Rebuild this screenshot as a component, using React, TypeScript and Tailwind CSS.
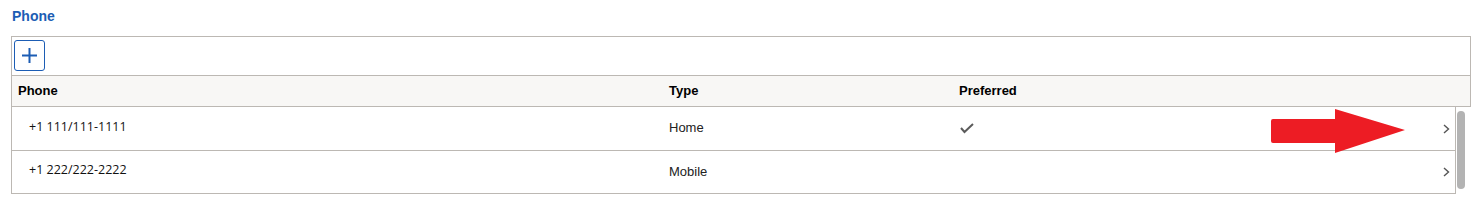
import React from 'react';

const BORDER = 'border-[#bcb8b3]';

const phones = [
  { number: '+1 111/111-1111', type: 'Home', preferred: true, h: 'h-[44px]' },
  { number: '+1 222/222-2222', type: 'Mobile', preferred: false, h: 'h-[43px]' },
];

const Check = () => (
  <svg width="14" height="11" viewBox="0 0 14 11" className="block">
    <polyline points="1,5 4.5,9 13,1" fill="none" stroke="#5b5b5b" strokeWidth="2" />
  </svg>
);

const Chevron = () => (
  <svg width="7" height="10" viewBox="0 0 7 10" className="block">
    <polyline points="1,1 5.5,5 1,9" fill="none" stroke="#555" strokeWidth="1.4" />
  </svg>
);

const RedArrow = () => (
  <svg
    width="136"
    height="46"
    viewBox="0 0 136 46"
    className="absolute left-[1270px] top-[108px] pointer-events-none"
  >
    <path d="M3 11 H65 V1 L135 22 L65 45 V35 H3 Q1 35 1 33 V13 Q1 11 3 11 Z" fill="#ed1c24" />
  </svg>
);

export default function App() {
  return (
    <div className="relative w-[1476px] h-[203px] bg-white px-[11px]" style={{ fontFamily: '"Liberation Sans", Arial, sans-serif' }}>
      <div className="h-[36px] pt-[8px] pl-px text-[14px] leading-4 font-bold text-[#1c5db4]">Phone</div>

      {/* toolbar */}
      <div className={`h-[40px] border ${BORDER} flex items-start pt-[3px] pl-[2px] w-[1460px]`}>
        <button className="w-[31px] h-[31px] border border-[#1c5db4] rounded-[3px] flex items-center justify-center bg-white">
          <svg width="15" height="15" viewBox="0 0 15 15">
            <path d="M7.5 0 V15 M0 7.5 H15" stroke="#1c5db4" strokeWidth="2" />
          </svg>
        </button>
      </div>

      {/* header */}
      <div className={`h-[31px] w-[1460px] border-x border-b ${BORDER} bg-[#f8f7f5] grid grid-cols-[657px_290px_1fr] items-center text-[13px] font-bold text-black`}>
        <div className="pl-[6px]">Phone</div>
        <div>Type</div>
        <div>Preferred</div>
      </div>

      {/* body */}
      <div className="flex">
        <div className="w-[1451px]">
          {phones.map(p => (
            <div
              key={p.number}
              className={`${p.h} border-x border-b ${BORDER} grid grid-cols-[657px_290px_1fr] items-center text-[13px] text-[#222]`}
            >
              <div className="pl-[17px] pb-[3px] text-[12.5px] text-[#111]" style={{ fontFamily: '"Open Sans", sans-serif' }}>
                {p.number}
              </div>
              <div className="pb-[1px]">{p.type}</div>
              <div className="flex items-center justify-between pr-[5px]">
                <div className="pl-px">{p.preferred && <Check />}</div>
                <Chevron />
              </div>
            </div>
          ))}
        </div>
        <div className="flex-1 pt-[4px] pl-px">
          <div className="w-[8px] h-[78px] rounded-full bg-[#b3b3b3]" />
        </div>
      </div>

      <RedArrow />
    </div>
  );
}
